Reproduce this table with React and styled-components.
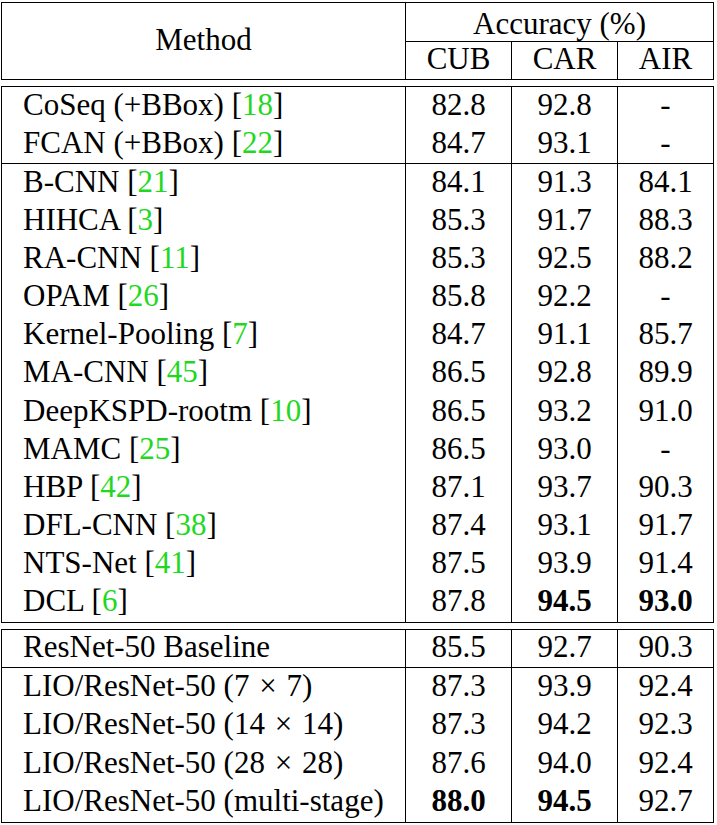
import React from "react";
import styled, { createGlobalStyle } from "styled-components";

const COLS = "404px 106px 106px 95px";
const LINE = "1px solid #000";

const GlobalStyle = createGlobalStyle`
  html, body { margin: 0; padding: 0; background: #fff; }
  body {
    font-family: "Liberation Serif", "Times New Roman", serif;
    color: #000;
  }
  *, *::before, *::after { box-sizing: border-box; }
`;

const Page = styled.div`
  width: 714px;
  padding: 2px 0 0 1px;
  font-size: 31px;
  line-height: 1;
`;

const Box = styled.div`
  width: 713px;
  border: ${LINE};
  & + & { margin-top: 6px; }
`;

const HeaderGrid = styled.div`
  display: grid;
  grid-template-columns: ${COLS};
  grid-template-rows: 39px 37px;
`;

const HeadCell = styled.div`
  grid-column: ${(p) => p.$col};
  grid-row: ${(p) => p.$row};
  display: flex;
  align-items: center;
  justify-content: center;
  white-space: nowrap;
  border-right: ${(p) => (p.$last ? "none" : LINE)};
  border-bottom: ${(p) => (p.$under ? LINE : "none")};
  padding: ${(p) => p.$pad || "0 0 4px 0"};
`;

const Group = styled.div`
  display: flex;
  flex-direction: column;
  height: ${(p) => p.$h}px;
  & + & { border-top: ${LINE}; }
`;

const Row = styled.div`
  flex: 1;
  display: grid;
  grid-template-columns: ${COLS};
`;

const Cell = styled.div`
  display: flex;
  align-items: center;
  justify-content: ${(p) => (p.$left ? "flex-start" : "center")};
  padding: ${(p) => (p.$left ? "0 0 4px 21px" : "0 0 4px 0")};
  white-space: nowrap;
  font-weight: ${(p) => (p.$bold ? 700 : 400)};
  border-right: ${(p) => (p.$last ? "none" : LINE)};
`;

const Cite = styled.span`
  color: #1fd81f;
`;

const Times = styled.span`
  margin: 0 2px;
`;

function MethodName({ name, cite, size }) {
  if (size) {
    return (
      <>
        {name} ({size}&nbsp;<Times>{"\u00d7"}</Times>&nbsp;{size})
      </>
    );
  }
  if (!cite) return <>{name}</>;
  return (
    <>
      {name} [<Cite>{cite}</Cite>]
    </>
  );
}

function DataRow({ r }) {
  const vals = [r.cub, r.car, r.air];
  return (
    <Row>
      <Cell $left>
        <MethodName name={r.name} cite={r.cite} size={r.size} />
      </Cell>
      {vals.map((v, i) => (
        <Cell key={i} $last={i === 2} $bold={r.bold && r.bold.includes(i)}>
          {v}
        </Cell>
      ))}
    </Row>
  );
}

const bboxRows = [
  { name: "CoSeq (+BBox)", cite: "18", cub: "82.8", car: "92.8", air: "-" },
  { name: "FCAN (+BBox)", cite: "22", cub: "84.7", car: "93.1", air: "-" },
];

const methodRows = [
  { name: "B-CNN", cite: "21", cub: "84.1", car: "91.3", air: "84.1" },
  { name: "HIHCA", cite: "3", cub: "85.3", car: "91.7", air: "88.3" },
  { name: "RA-CNN", cite: "11", cub: "85.3", car: "92.5", air: "88.2" },
  { name: "OPAM", cite: "26", cub: "85.8", car: "92.2", air: "-" },
  { name: "Kernel-Pooling", cite: "7", cub: "84.7", car: "91.1", air: "85.7" },
  { name: "MA-CNN", cite: "45", cub: "86.5", car: "92.8", air: "89.9" },
  { name: "DeepKSPD-rootm", cite: "10", cub: "86.5", car: "93.2", air: "91.0" },
  { name: "MAMC", cite: "25", cub: "86.5", car: "93.0", air: "-" },
  { name: "HBP", cite: "42", cub: "87.1", car: "93.7", air: "90.3" },
  { name: "DFL-CNN", cite: "38", cub: "87.4", car: "93.1", air: "91.7" },
  { name: "NTS-Net", cite: "41", cub: "87.5", car: "93.9", air: "91.4" },
  { name: "DCL", cite: "6", cub: "87.8", car: "94.5", air: "93.0", bold: [1, 2] },
];

const baseRows = [
  { name: "ResNet-50 Baseline", cub: "85.5", car: "92.7", air: "90.3" },
];

const lioRows = [
  { name: "LIO/ResNet-50", size: "7", cub: "87.3", car: "93.9", air: "92.4" },
  { name: "LIO/ResNet-50", size: "14", cub: "87.3", car: "94.2", air: "92.3" },
  { name: "LIO/ResNet-50", size: "28", cub: "87.6", car: "94.0", air: "92.4" },
  { name: "LIO/ResNet-50 (multi-stage)", cub: "88.0", car: "94.5", air: "92.7", bold: [0, 1] },
];

export default function App() {
  return (
    <>
      <GlobalStyle />
      <Page>
        <Box>
          <HeaderGrid>
            <HeadCell $col="1" $row="1 / 3">Method</HeadCell>
            <HeadCell $col="2 / 5" $row="1" $last $under $pad="2px 0 0 0">
              Accuracy (%)
            </HeadCell>
            <HeadCell $col="2" $row="2">CUB</HeadCell>
            <HeadCell $col="3" $row="2">CAR</HeadCell>
            <HeadCell $col="4" $row="2" $last>AIR</HeadCell>
          </HeaderGrid>
        </Box>
        <Box>
          <Group $h={76}>
            {bboxRows.map((r) => (
              <DataRow key={r.name} r={r} />
            ))}
          </Group>
          <Group $h={459}>
            {methodRows.map((r) => (
              <DataRow key={r.name} r={r} />
            ))}
          </Group>
        </Box>
        <Box>
          <Group $h={37}>
            {baseRows.map((r) => (
              <DataRow key={r.name} r={r} />
            ))}
          </Group>
          <Group $h={155}>
            {lioRows.map((r, i) => (
              <DataRow key={i} r={r} />
            ))}
          </Group>
        </Box>
      </Page>
    </>
  );
}
